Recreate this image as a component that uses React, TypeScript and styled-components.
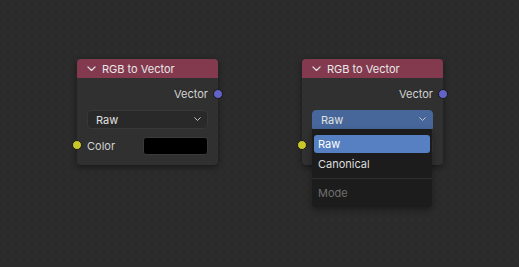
import React from "react";
import styled, { createGlobalStyle } from "styled-components";

const Global = createGlobalStyle`
  html, body { margin: 0; padding: 0; }
  body {
    width: 519px; height: 267px; overflow: hidden;
    background: #2b2b2b;
    font-family: Inter, "DejaVu Sans", sans-serif;
  }
`;

const Canvas = styled.div`
  position: relative;
  width: 519px;
  height: 267px;
  background-color: #2b2b2b;
  background-image: radial-gradient(#2f2f2f 0.7px, transparent 0.8px);
  background-size: 8px 8px;
`;

const Node = styled.div<{ $x: number; $y: number }>`
  position: absolute;
  left: ${(p) => p.$x}px;
  top: ${(p) => p.$y}px;
  width: 141px;
  background: #303030;
  border-radius: 4px;
  box-shadow: 0 2px 6px rgba(0, 0, 0, 0.45);
  display: flex;
  flex-direction: column;
`;

const Header = styled.div`
  height: 19px;
  background: #833a4f;
  border-radius: 4px 4px 0 0;
  display: flex;
  align-items: center;
  gap: 6px;
  padding-left: 10px;
  color: #e8e8e8;
  font-size: 11px;
`;

const Body = styled.div`
  position: relative;
  display: flex;
  flex-direction: column;
  padding: 6px 10px 10px 10px;
`;

const OutputRow = styled.div`
  height: 20px;
  display: flex;
  align-items: center;
  justify-content: flex-end;
  color: #d2d2d2;
  font-size: 11px;
`;

const Dropdown = styled.div<{ $open?: boolean }>`
  margin-top: 6px;
  height: 19px;
  box-sizing: border-box;
  border-radius: ${(p) => (p.$open ? "4px 4px 0 0" : "4px")};
  background: ${(p) => (p.$open ? "#47679a" : "#292929")};
  border: 1px solid ${(p) => (p.$open ? "#47679a" : "#383838")};
  display: flex;
  align-items: center;
  justify-content: space-between;
  padding: 0 6px 0 8px;
  color: #e0e0e0;
  font-size: 11px;
  position: relative;
`;

const InputRow = styled.div`
  margin-top: 8px;
  height: 18px;
  display: flex;
  align-items: center;
  justify-content: space-between;
  color: #d2d2d2;
  font-size: 11px;
`;

const Label = styled.span<{ $hidden?: boolean }>`
  visibility: ${(p) => (p.$hidden ? "hidden" : "visible")};
`;

const Swatch = styled.div`
  width: 65px;
  height: 18px;
  box-sizing: border-box;
  background: #000;
  border: 1px solid #3a3a3a;
  border-radius: 3px;
`;

const Socket = styled.div<{ $color: string; $side: "left" | "right" }>`
  position: absolute;
  ${(p) => (p.$side === "left" ? "left: -5px;" : "right: -5px;")}
  width: 10px;
  height: 10px;
  box-sizing: border-box;
  border-radius: 50%;
  background: ${(p) => p.$color};
  border: 1px solid #1a1a1a;
`;

const Menu = styled.div`
  position: absolute;
  left: -1px;
  top: 18px;
  width: 120px;
  background: #1c1c1c;
  border-radius: 0 0 4px 4px;
  box-shadow: 0 3px 6px rgba(0, 0, 0, 0.35);
  padding: 6px 2px 5px 2px;
  box-sizing: border-box;
  display: flex;
  flex-direction: column;
  z-index: 2;
`;

const MenuItem = styled.div<{ $active?: boolean }>`
  height: 18px;
  border-radius: 3px;
  background: ${(p) => (p.$active ? "#5680c2" : "transparent")};
  color: ${(p) => (p.$active ? "#ffffff" : "#dcdcdc")};
  display: flex;
  align-items: center;
  padding-left: 4px;
  font-size: 11px;
  margin-bottom: 2px;
`;

const Separator = styled.div`
  height: 1px;
  background: #2e2e2e;
  margin: 3px -2px 5px -2px;
`;

const MenuTitle = styled.div`
  height: 18px;
  display: flex;
  align-items: center;
  padding-left: 4px;
  color: #6f6f6f;
  font-size: 11px;
`;

const Chevron = ({ color = "#d0d0d0", size = 8 }: { color?: string; size?: number }) => (
  <svg width={size} height={size * 0.6} viewBox="0 0 10 6" fill="none">
    <path d="M1 1 L5 5 L9 1" stroke={color} strokeWidth="1.4" strokeLinecap="round" strokeLinejoin="round" />
  </svg>
);

const RgbNode = ({ x, open }: { x: number; open?: boolean }) => (
  <Node $x={x} $y={59}>
    <Header>
      <Chevron color="#e0e0e0" size={9} />
      <span>RGB to Vector</span>
    </Header>
    <Body>
      <OutputRow>
        Vector
        <Socket $color="#6363c7" $side="right" style={{ top: 11 }} />
      </OutputRow>
      <Dropdown $open={open}>
        <span>Raw</span>
        <Chevron color="#c8c8c8" size={7} />
        {open && (
          <Menu>
            <MenuItem $active>Raw</MenuItem>
            <MenuItem>Canonical</MenuItem>
            <Separator />
            <MenuTitle>Mode</MenuTitle>
          </Menu>
        )}
      </Dropdown>
      <InputRow>
        <Label $hidden={open}>Color</Label>
        <Swatch />
        <Socket $color="#c7c729" $side="left" style={{ top: 62 }} />
      </InputRow>
    </Body>
  </Node>
);

export default function App() {
  return (
    <>
      <Global />
      <Canvas>
        <RgbNode x={77} />
        <RgbNode x={302} open />
      </Canvas>
    </>
  );
}
